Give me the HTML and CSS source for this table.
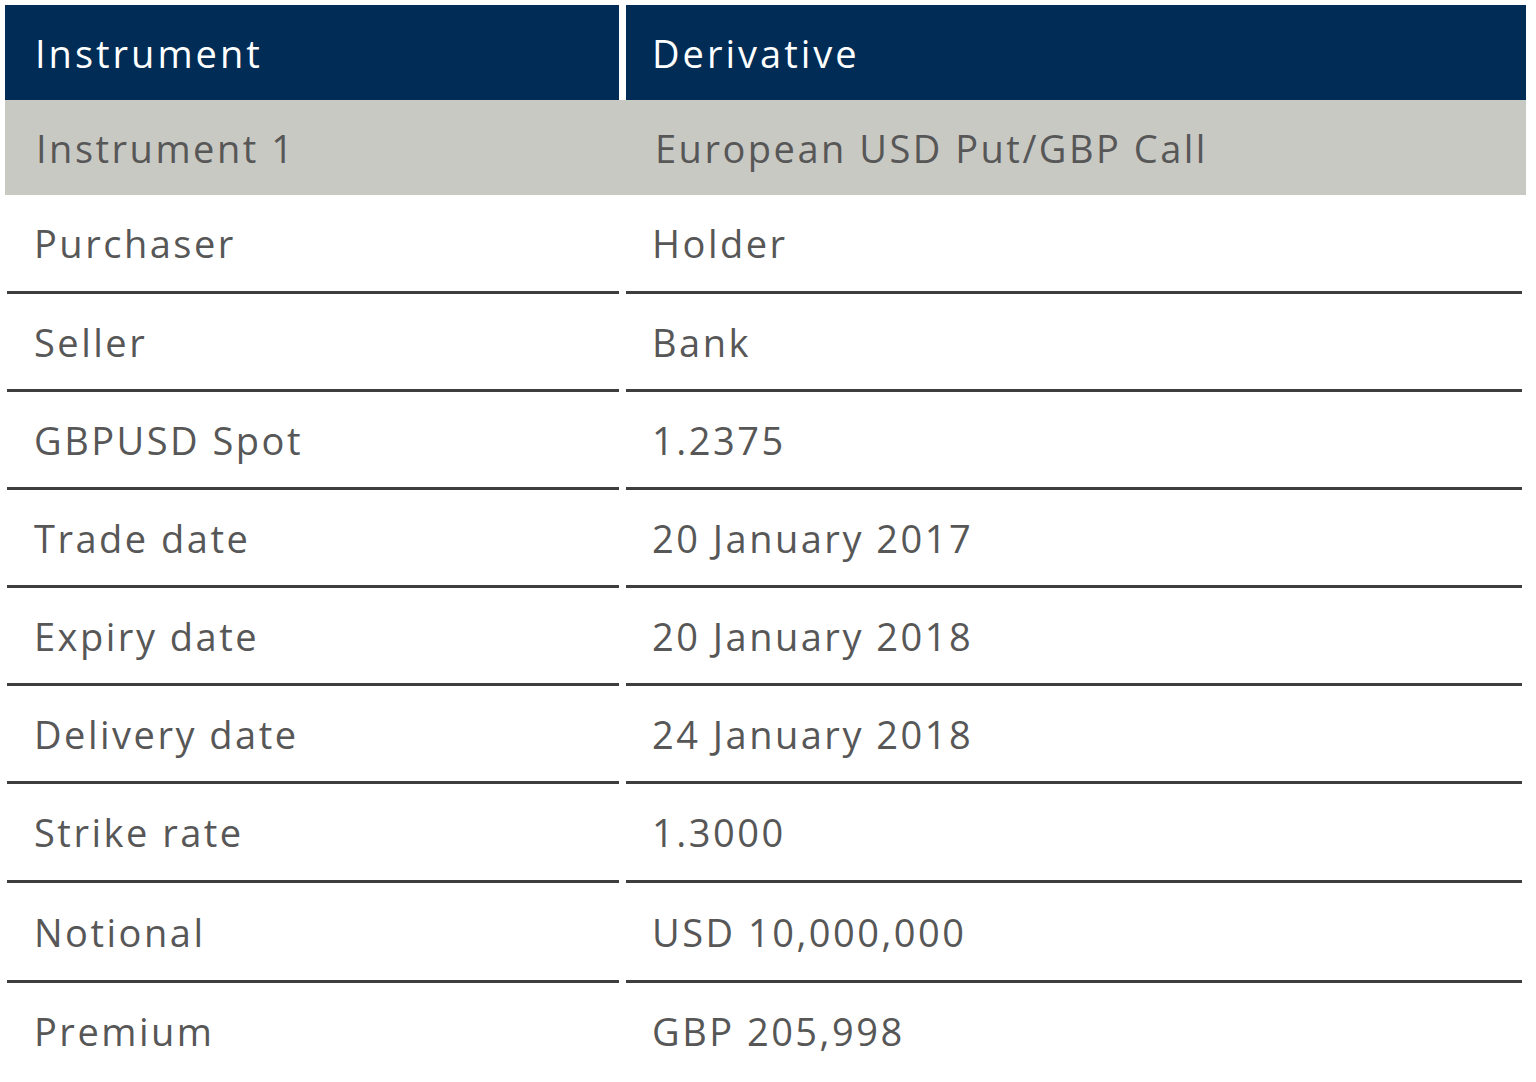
FILE: index.html
```html
<!DOCTYPE html>
<html lang="en">
<head>
<meta charset="utf-8">
<title>Instrument table</title>
<link rel="stylesheet" href="styles.css">
</head>
<body>
<div class="table">
  <div class="row head">
    <div class="cell c1">Instrument</div>
    <div class="cell c2">Derivative</div>
  </div>
  <div class="row sub">
    <div class="cell c1">Instrument 1</div>
    <div class="cell c2">European USD Put/GBP Call</div>
  </div>
  <div class="row data first">
    <div class="cell c1">Purchaser</div>
    <div class="cell c2">Holder</div>
  </div>
  <div class="row data">
    <div class="cell c1">Seller</div>
    <div class="cell c2">Bank</div>
  </div>
  <div class="row data">
    <div class="cell c1">GBPUSD Spot</div>
    <div class="cell c2">1.2375</div>
  </div>
  <div class="row data">
    <div class="cell c1">Trade date</div>
    <div class="cell c2">20 January 2017</div>
  </div>
  <div class="row data">
    <div class="cell c1">Expiry date</div>
    <div class="cell c2">20 January 2018</div>
  </div>
  <div class="row data">
    <div class="cell c1">Delivery date</div>
    <div class="cell c2">24 January 2018</div>
  </div>
  <div class="row data tall">
    <div class="cell c1">Strike rate</div>
    <div class="cell c2">1.3000</div>
  </div>
  <div class="row data taller">
    <div class="cell c1">Notional</div>
    <div class="cell c2">USD 10,000,000</div>
  </div>
  <div class="row data last">
    <div class="cell c1">Premium</div>
    <div class="cell c2">GBP 205,998</div>
  </div>
</div>
</body>
</html>
```
FILE: styles.css
```css
html, body {
  margin: 0;
  padding: 0;
  background: #ffffff;
}

body {
  padding: 5px 0 0 5px;
  font-family: "Open Sans", "Liberation Sans", sans-serif;
  font-size: 38px;
  letter-spacing: 2.5px;
  color: #575757;
}

.table {
  width: 1521px;
  display: flex;
  flex-direction: column;
}

.row {
  display: grid;
  grid-template-columns: 614px 1fr;
  column-gap: 7px;
}

.cell {
  display: flex;
  align-items: center;
  white-space: nowrap;
}

.head .cell {
  height: 95px;
  background: #002c55;
  color: #ffffff;
  font-weight: 500;
  letter-spacing: 3px;
}

.head .c1 { padding-left: 30px; }
.head .c2 { padding-left: 26px; }

.sub {
  background: #c9c9c4;
}

.sub .cell {
  height: 95px;
}

.sub .c1 { padding-left: 31px; }
.sub .c2 { padding-left: 29px; }

.data .cell {
  height: 95px;
  border-bottom: 3px solid #3e3e3e;
}

.data.first .cell {
  height: 96px;
}

.data.tall .cell {
  height: 96px;
}

.data.taller .cell {
  height: 97px;
}

.data .c1 {
  margin-left: 2px;
  padding-left: 27px;
}

.data .c2 {
  margin-right: 4px;
  padding-left: 26px;
}

.data.last .cell {
  border-bottom-color: transparent;
}
```
